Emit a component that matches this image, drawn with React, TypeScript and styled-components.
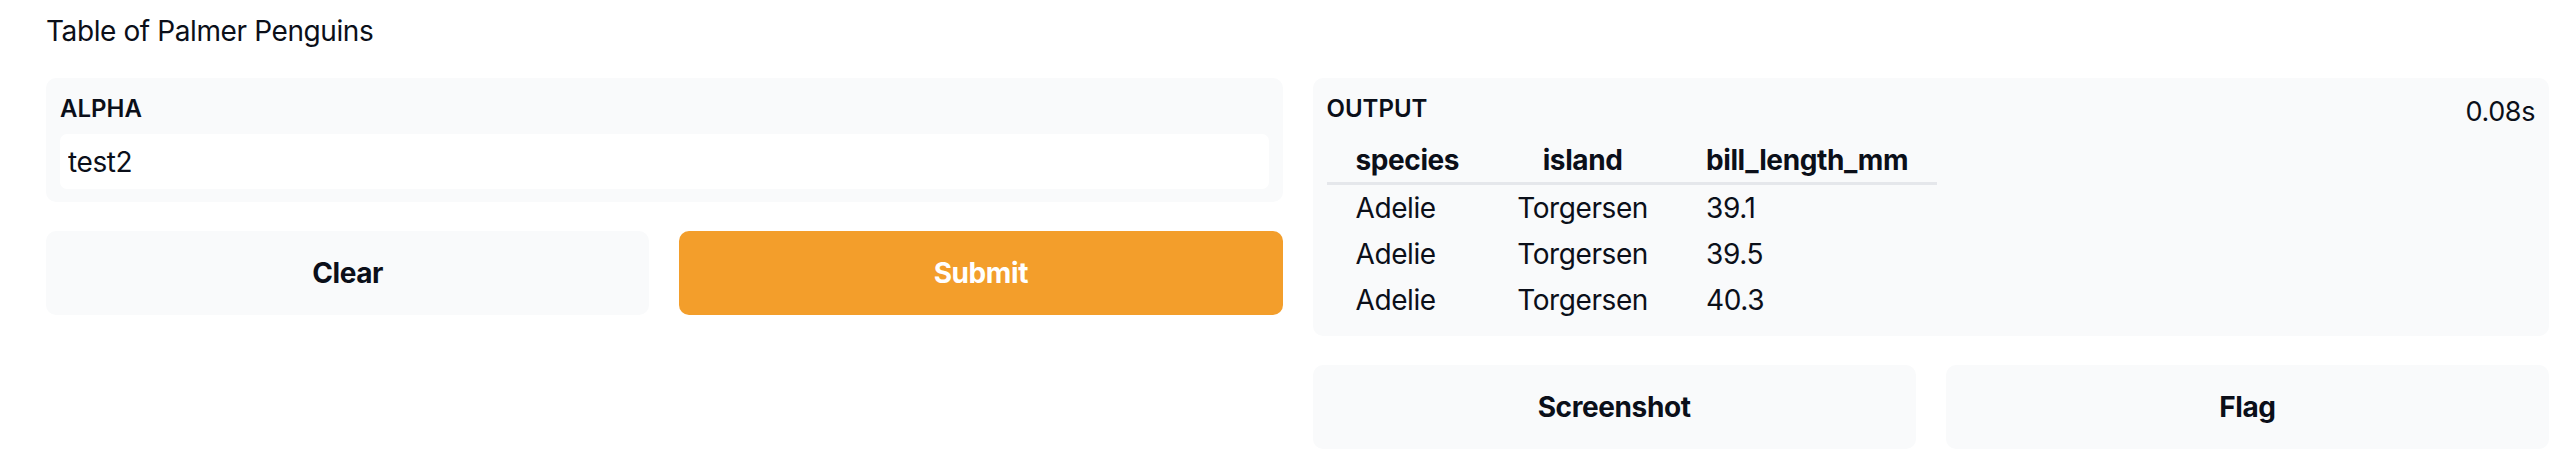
import React from "react";
import styled, { createGlobalStyle } from "styled-components";

const GlobalStyle = createGlobalStyle`
  html, body {
    margin: 0;
    padding: 0;
    background: #ffffff;
  }
  body {
    font-family: Inter, "Noto Sans", "Liberation Sans", sans-serif;
    color: #0b0f19;
    letter-spacing: -0.025em;
  }
`;

const Page = styled.div`
  padding: 14px 23px 20px 46px;
`;

const Title = styled.div`
  font-size: 28px;
  line-height: 34px;
  margin-bottom: 30px;
`;

const Columns = styled.div`
  display: grid;
  grid-template-columns: 1fr 1fr;
  gap: 30px;
  align-items: start;
`;

const Column = styled.div`
  display: flex;
  flex-direction: column;
  gap: 29px;
`;

const Panel = styled.div`
  background: #f9fafb;
  border-radius: 10px;
  padding: 14px 14px 13px;
`;

const PanelHead = styled.div`
  display: flex;
  justify-content: space-between;
  align-items: flex-start;
  margin-bottom: 8px;
`;

const Label = styled.div`
  font-size: 24px;
  line-height: 34px;
  font-weight: 600;
  letter-spacing: 0;
  text-transform: uppercase;
`;

const Timer = styled.div`
  font-size: 27px;
  line-height: 34px;
  margin-top: 3px;
`;

const TextInput = styled.input`
  display: block;
  width: 100%;
  box-sizing: border-box;
  border: none;
  outline: none;
  border-radius: 7px;
  background: #ffffff;
  font-family: inherit;
  letter-spacing: inherit;
  font-size: 28px;
  line-height: 39px;
  height: 55px;
  padding: 8px;
  color: #0b0f19;
`;

const ButtonRow = styled.div`
  display: grid;
  grid-template-columns: 1fr 1fr;
  gap: 30px;
`;

const Button = styled.button<{ $primary?: boolean }>`
  height: 84px;
  border: none;
  border-radius: 10px;
  font-family: inherit;
  letter-spacing: inherit;
  font-size: 28px;
  font-weight: 700;
  cursor: pointer;
  background: ${(p) => (p.$primary ? "#f39e2b" : "#f9fafb")};
  color: ${(p) => (p.$primary ? "#ffffff" : "#0b0f19")};
`;

const Table = styled.table`
  border-collapse: collapse;
  font-size: 28px;
  line-height: 32px;
`;

const HeadCell = styled.th`
  font-weight: 700;
  text-align: center;
  padding: 7px 29px 6px;
  border-bottom: 3px solid #e5e7eb;
  white-space: nowrap;
`;

const Cell = styled.td`
  text-align: left;
  padding: 7px 29px;
  white-space: nowrap;
`;

const columns = ["species", "island", "bill_length_mm"];
const rows = [
  ["Adelie", "Torgersen", "39.1"],
  ["Adelie", "Torgersen", "39.5"],
  ["Adelie", "Torgersen", "40.3"],
];

export default function App() {
  return (
    <Page>
      <GlobalStyle />
      <Title>Table of Palmer Penguins</Title>
      <Columns>
        <Column>
          <Panel>
            <PanelHead>
              <Label>alpha</Label>
            </PanelHead>
            <TextInput defaultValue="test2" />
          </Panel>
          <ButtonRow>
            <Button>Clear</Button>
            <Button $primary>Submit</Button>
          </ButtonRow>
        </Column>
        <Column>
          <Panel>
            <PanelHead>
              <Label>output</Label>
              <Timer>0.08s</Timer>
            </PanelHead>
            <Table>
              <thead>
                <tr>
                  {columns.map((c) => (
                    <HeadCell key={c}>{c}</HeadCell>
                  ))}
                </tr>
              </thead>
              <tbody>
                {rows.map((r, i) => (
                  <tr key={i}>
                    {r.map((v, j) => (
                      <Cell key={j}>{v}</Cell>
                    ))}
                  </tr>
                ))}
              </tbody>
            </Table>
          </Panel>
          <ButtonRow>
            <Button>Screenshot</Button>
            <Button>Flag</Button>
          </ButtonRow>
        </Column>
      </Columns>
    </Page>
  );
}
